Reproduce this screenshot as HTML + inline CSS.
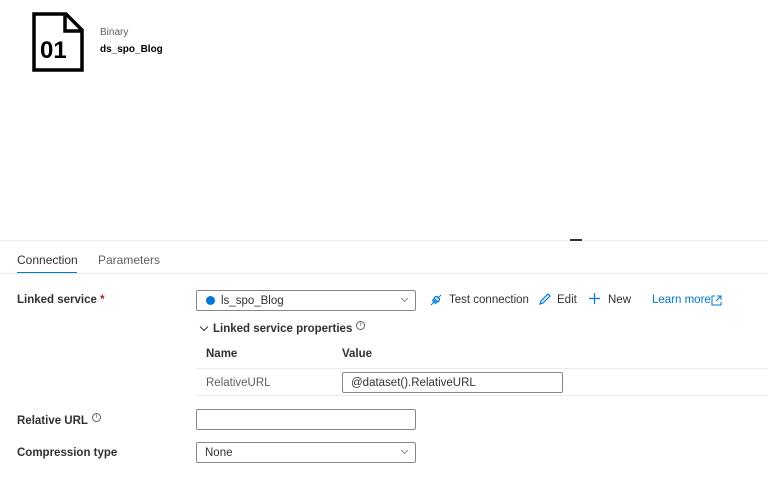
<!DOCTYPE html>
<html><head><meta charset="utf-8"><style>
*{margin:0;padding:0;box-sizing:border-box}
body{width:768px;height:487px;background:#fff;font-family:"Liberation Sans",sans-serif;color:#323130;position:relative;overflow:hidden;font-size:11.5px}
.a{position:absolute;white-space:nowrap}
.box{position:absolute;border:1px solid #8a8886;border-radius:2px;background:#fff;height:21px;font-size:11.5px;line-height:20px;padding-left:8px}
.b{font-weight:bold}
.chev{position:absolute;right:8px;top:5px;width:5px;height:5px;border-right:1px solid #8a8886;border-bottom:1px solid #8a8886;transform:rotate(45deg)}
.info{display:inline-block;width:9px;height:9px;border:1px solid #605e5c;border-radius:50%;font-size:6px;line-height:7px;text-align:center;vertical-align:top;margin-left:4px;margin-top:-2px}
</style></head><body>
<svg class="a" style="left:32px;top:12px" width="52" height="60" viewBox="0 0 52 60">
<path d="M2 2 H34 L50 18 V58 H2 Z" fill="none" stroke="#000" stroke-width="3.5"/>
<path d="M33 2 V19 H50" fill="none" stroke="#000" stroke-width="3.5"/>
<text x="8" y="46" font-family="Liberation Sans" font-weight="bold" font-size="24" fill="#000">01</text>
</svg>
<div class="a" style="left:100px;top:27px;font-size:10px;color:#605e5c">Binary</div>
<div class="a b" style="left:100px;top:44px;font-size:10px;color:#000">ds_spo_Blog</div>

<div class="a" style="left:0;top:240px;width:768px;height:1px;background:#edebe9"></div>
<div class="a" style="left:570px;top:239px;width:12px;height:2px;background:#323130"></div>
<div class="a" style="left:17px;top:253px;font-size:12px">Connection</div>
<div class="a" style="left:98px;top:253px;font-size:12px;color:#605e5c">Parameters</div>
<div class="a" style="left:17px;top:272px;width:60px;height:2px;background:#0078d4"></div>
<div class="a" style="left:0;top:273px;width:768px;height:1px;background:#edebe9"></div>

<div class="a b" style="left:17px;top:294px">Linked service <span style="color:#a4262c">*</span></div>
<div class="box" style="left:196px;top:290px;width:220px;padding-left:24px">ls_spo_Blog<span class="chev"></span>
<span style="position:absolute;left:9px;top:5px;width:9px;height:9px;border-radius:50%;background:#0078d4"></span></div>
<svg class="a" style="left:429px;top:293px" width="14" height="14" viewBox="0 0 14 14" fill="none" stroke="#0078d4" stroke-width="1.2"><path d="M2 12 L5 9 M9 5 L12 2 M4 6 L8 10 M5 5 Q8 2 9 5 Q12 6 9 9 L5 5 M3 7 L7 11"/></svg>
<div class="a" style="left:449px;top:294px">Test connection</div>
<svg class="a" style="left:538px;top:292px" width="14" height="14" viewBox="0 0 14 14" fill="none" stroke="#0078d4" stroke-width="1.2"><path d="M2 12 L3 9 L10 2 L12 4 L5 11 Z"/></svg>
<div class="a" style="left:557px;top:294px">Edit</div>
<svg class="a" style="left:588px;top:292px" width="13" height="13" viewBox="0 0 13 13" stroke="#0078d4" stroke-width="1.2"><path d="M6.5 1 V12 M1 6.5 H12"/></svg>
<div class="a" style="left:608px;top:294px">New</div>
<div class="a" style="left:652px;top:294px;color:#0078d4">Learn more</div>
<svg class="a" style="left:711px;top:295px" width="11" height="11" viewBox="0 0 11 11" fill="none" stroke="#0078d4"><path d="M4 1 H1 V10 H10 V7 M6 1 H10 V5 M10 1 L5 6"/></svg>

<div class="a" style="left:201px;top:324px;width:6px;height:6px;border-right:1px solid #323130;border-bottom:1px solid #323130;transform:rotate(45deg)"></div>
<div class="a b" style="left:213px;top:323px">Linked service properties<span class="info" style="font-weight:normal">i</span></div>
<div class="a b" style="left:206px;top:348px">Name</div>
<div class="a b" style="left:342px;top:348px">Value</div>
<div class="a" style="left:196px;top:368px;width:572px;height:1px;background:#edebe9"></div>
<div class="a" style="left:206px;top:377px;color:#605e5c">RelativeURL</div>
<div class="box" style="left:342px;top:372px;width:221px">@dataset().RelativeURL</div>
<div class="a" style="left:196px;top:395px;width:572px;height:1px;background:#edebe9"></div>

<div class="a b" style="left:17px;top:415px">Relative URL<span class="info" style="font-weight:normal">i</span></div>
<div class="box" style="left:196px;top:409px;width:220px"></div>
<div class="a b" style="left:17px;top:447px">Compression type</div>
<div class="box" style="left:196px;top:442px;width:220px">None<span class="chev"></span></div>
</body></html>
